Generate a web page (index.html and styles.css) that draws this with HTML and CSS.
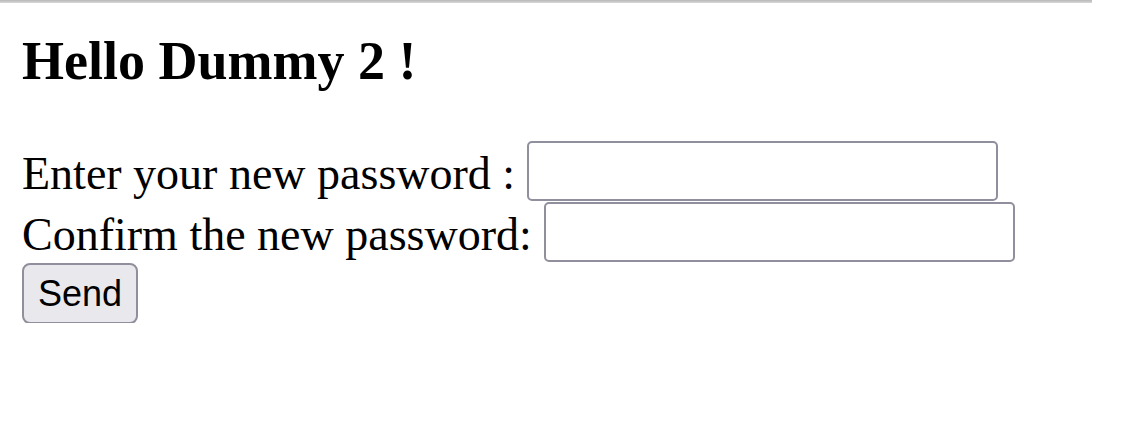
FILE: index.html
```html
<!DOCTYPE html>
<html>
<head>
<meta charset="utf-8">
<link rel="stylesheet" href="styles.css">
</head>
<body>
<div class="topline"></div>
<main class="page">
  <h3 class="greeting">Hello Dummy 2 !</h3>
  <form class="form">
    <div class="row"><label>Enter your new password :</label> <input type="password" class="field"></div>
    <div class="row"><label>Confirm the new password:</label> <input type="password" class="field"></div>
    <div class="row"><button type="button" class="send">Send</button></div>
  </form>
</main>
</body>
</html>
```

FILE: styles.css
```css
html, body {
  margin: 0;
  padding: 0;
  background: #ffffff;
}
body {
  font-family: "Liberation Serif", "Times New Roman", serif;
  font-size: 46px;
  color: #000;
}
.topline {
  width: 1092px;
  height: 3px;
  background: linear-gradient(#b8b8b8, #d8d8d8);
}
.page {
  padding: 0 22px;
}
.greeting {
  font-size: 54px;
  font-weight: bold;
  margin: 26px 0 48px;
  line-height: 64px;
}
.form {
  display: flex;
  flex-direction: column;
  gap: 1px;
}
.row {
  display: flex;
  align-items: center;
  gap: 12px;
  height: 60px;
}
.row label {
  white-space: nowrap;
  line-height: 60px;
  padding-top: 5px;
}
.field {
  box-sizing: border-box;
  width: 471px;
  height: 60px;
  border: 2px solid #8f8f9d;
  border-radius: 5px;
  background: #fff;
  margin: 0;
}
.send {
  box-sizing: border-box;
  height: 61px;
  padding: 2px 14px 0;
  font-family: "Liberation Sans", Arial, sans-serif;
  font-size: 36px;
  color: #000;
  background: #e9e9ed;
  border: 2px solid #8f8f9d;
  border-radius: 8px;
}
```
